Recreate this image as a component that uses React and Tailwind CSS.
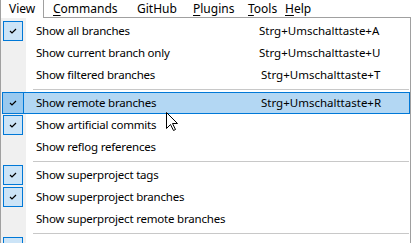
import React from "react";

const font = { fontFamily: '"Noto Sans", "Open Sans", sans-serif' };

function CheckSvg({ size = 20, vb = "0 0 20 20" }) {
  return (
    <svg width={size} height={size} viewBox={vb} className="block">
      <polyline points="7,10 9,12 13,8" fill="none" stroke="#000" strokeWidth="1.2" />
    </svg>
  );
}

function Row({ label, shortcut, checked, highlighted, scOffset = 0 }) {
  if (highlighted) {
    return (
      <div className="relative ml-[1px] h-[22px] border border-[#0078d7] bg-[#b3d7f3] flex items-center">
        <div className="absolute left-[-1px] top-[-1px] w-[22px] h-[22px] border border-[#0078d7] bg-[#99c9ef]">
          {checked && <CheckSvg />}
        </div>
        <span className="ml-[33px] w-[223px] shrink-0 whitespace-nowrap leading-[20px] text-[11.5px] tracking-[-0.2px]">
          {label}
        </span>
        {shortcut && (
          <span className="whitespace-nowrap leading-[20px] text-[11.5px]" style={{ marginLeft: scOffset }}>
            {shortcut}
          </span>
        )}
      </div>
    );
  }
  return (
    <div className="h-[22px] flex items-center">
      <div className="ml-[2px] w-[20px] h-[20px] shrink-0">
        {checked && (
          <div className="w-[20px] h-[20px] border border-[#0078d7] bg-[#cce4f7]">
            <CheckSvg size={18} vb="1 1 18 18" />
          </div>
        )}
      </div>
      <span className="ml-[13px] w-[223px] shrink-0 whitespace-nowrap leading-[22px] text-[11.5px] tracking-[-0.2px]">
        {label}
      </span>
      {shortcut && (
        <span className="whitespace-nowrap leading-[22px] text-[11.5px]" style={{ marginLeft: scOffset }}>
          {shortcut}
        </span>
      )}
    </div>
  );
}

function Sep() {
  return (
    <div className="h-[6px] pt-[3px]">
      <div className="ml-[32px] mr-[1px] h-px bg-[#c8c8c8]" />
    </div>
  );
}

export default function App() {
  return (
    <div
      className="relative w-[411px] h-[243px] overflow-hidden bg-white text-[12px] text-black"
      style={font}
    >
      {/* menu bar */}
      <div className="flex h-[17px] leading-[17px]">
        <div className="w-[44px] h-[17px] border-l border-r border-[#a0a0a0] pl-[8px]">View</div>
        <div className="w-[84px] pl-[9px]">
          <span className="underline underline-offset-2">C</span>ommands
        </div>
        <div className="w-[56px] pl-[9px]">GitHub</div>
        <div className="w-[55px] pl-[9px]">
          <span className="underline underline-offset-2">P</span>lugins
        </div>
        <div className="w-[37px] pl-[9px]">
          <span className="underline underline-offset-2">T</span>ools
        </div>
        <div className="pl-[9px]">
          <span className="underline underline-offset-2">H</span>elp
        </div>
      </div>

      {/* dropdown */}
      <div className="border-l border-r border-[#a0a0a0] h-[226px]">
        <div className="ml-[42px] h-px bg-[#a0a0a0]" />
        <div className="h-full pt-[2px] bg-[linear-gradient(to_right,#f0f0f0_25px,#ffffff_25px)]">
          <Row label="Show all branches" shortcut="Strg+Umschalttaste+A" checked />
          <Row label="Show current branch only" shortcut="Strg+Umschalttaste+U" />
          <Row label="Show filtered branches" shortcut="Strg+Umschalttaste+T" scOffset={2} />
          <Sep />
          <Row label="Show remote branches" shortcut="Strg+Umschalttaste+R" checked highlighted scOffset={2} />
          <Row label="Show artificial commits" checked />
          <Row label="Show reflog references" />
          <Sep />
          <Row label="Show superproject tags" checked />
          <Row label="Show superproject branches" checked />
          <Row label="Show superproject remote branches" />
          <Sep />
          <Row label="Show submodule remote branches" checked />
        </div>
      </div>

      {/* mouse cursor */}
      <svg
        className="absolute left-[166px] top-[112px]"
        width="13"
        height="20"
        viewBox="0 0 13 20"
      >
        <path
          d="M0.5 0.5 L0.5 16.5 L4.5 12.5 L7.5 18.5 L9.5 17.5 L6.5 11.5 L11.5 11.5 Z"
          fill="#fff"
          stroke="#000"
          strokeWidth="1"
          strokeLinejoin="miter"
        />
      </svg>
    </div>
  );
}
